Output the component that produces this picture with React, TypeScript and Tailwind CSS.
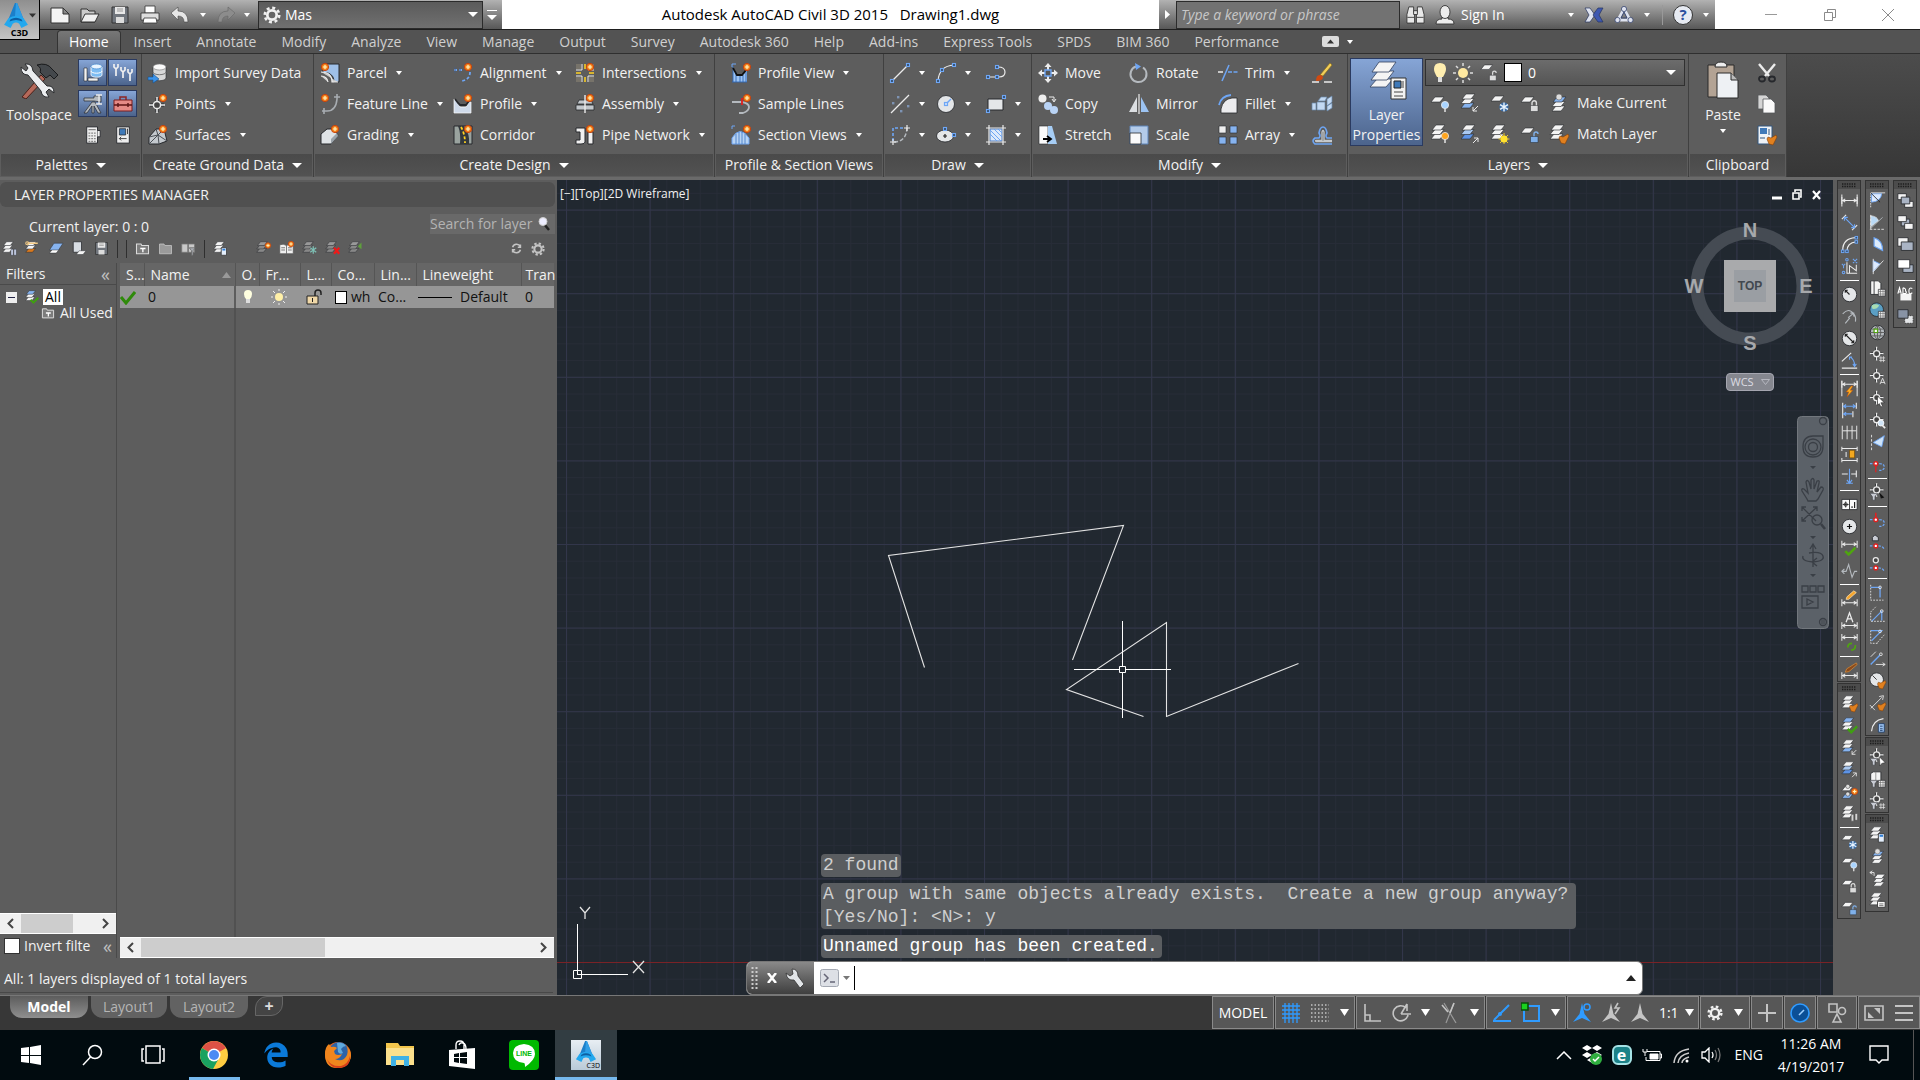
import type { ReactNode } from 'react'
import { FaEdgeLegacy } from 'react-icons/fa6'

const W = '#ececec'
const B = '#6ea6f5'
const D = '#26282c'

/* ---------- icon building blocks ---------- */

const Burst = ({ x = 15, y = 4 }) => (
  <g>
    <circle cx={x} cy={y} r="3.6" fill="#f58a1f" stroke="#c9400c" strokeWidth="1" />
    <path d={`M${x - 2} ${y}h4M${x} ${y - 2}v4`} stroke="#fff3c4" strokeWidth="1.2" />
  </g>
)

const Sheet = ({ x = 4, y = 5, f = '#f4f4f4' }) => (
  <path d={`M${x + 4} ${y}h9l-4 5h-9z`} fill={f} stroke={D} strokeWidth=".6" />
)

const Stack = ({ top = '#f4f4f4', mid = '#f4f4f4', low = '#f4f4f4' }) => (
  <g>
    <Sheet x={1} y={10} f={low} />
    <Sheet x={1} y={5.5} f={mid} />
    <Sheet x={2} y={1} f={top} />
  </g>
)

const Snow = () => (
  <g>
    <circle cx="14" cy="14" r="4.6" fill="#3c6ea8" />
    <path d="M14 9.5v9M10 11.7l8 4.6M18 11.7l-8 4.6" stroke="#e8f4ff" strokeWidth="1.4" />
  </g>
)

const Lock = ({ f = '#dcdcdc', open = false }) => (
  <g>
    <path d={open ? 'M14 13v-3a2 2 0 0 1 4 0' : 'M12 13v-3a2.2 2.2 0 0 1 4.4 0v3'} fill="none" stroke={f} strokeWidth="1.4" />
    <path d="M10.5 12.5h7.5v6h-7.5z" fill={f} stroke={D} strokeWidth=".5" />
  </g>
)

const Brush = () => <path d="M19 10l-5 3-3-1-1 2 2 5 4 1 2-4 2-4z" fill="#e0801f" stroke="#7d3c08" strokeWidth=".6" />

const Bulb = ({ f = '#a9d4ff' }) => (
  <g>
    <circle cx="15" cy="12" r="3.6" fill={f} stroke="#eee" strokeWidth=".8" />
    <path d="M15 15v4" stroke="#ddd" strokeWidth="1.6" />
  </g>
)

const Target = ({ cx = 9, cy = 9 }) => (
  <g fill="none" stroke={D} strokeWidth="3">
    <path d={`M${cx} ${cy - 7}v14M${cx - 7} ${cy}h14`} />
    <g stroke={W} strokeWidth="1.5">
      <path d={`M${cx} ${cy - 8}v5M${cx} ${cy + 3}v5M${cx - 8} ${cy}h5M${cx + 3} ${cy}h5`} />
      <circle cx={cx} cy={cy} r="3.6" fill="#444" />
    </g>
  </g>
)

const Funnel = () => <path d="M1 11h9l-3 4v4H4v-4z" fill="#c9ccd4" stroke={D} strokeWidth=".6" />

const Grid9 = () => (
  <g>
    <path d="M11 11h8v8h-8z" fill="#efefef" stroke={D} strokeWidth=".8" />
    <path d="M13.5 11v8M16.5 11v8M11 13.5h8M11 16.5h8" stroke="#666" strokeWidth=".7" />
  </g>
)

const Dim = ({ y = 14, c = W }) => (
  <path d={`M1 ${y - 4}v8M19 ${y - 4}v8M2 ${y}h16M5 ${y - 2}l-3 2 3 2M15 ${y - 2}l3 2-3 2`} fill="none" stroke={c} strokeWidth="1.2" />
)

const Osnap = () => (
  <g>
    <path d="M1 9h5M12 9q6 0 6 4t-6 4" fill="none" stroke={B} strokeWidth="1.4" strokeDasharray="3 1.5" />
    <circle cx="8" cy="9" r="2.2" fill="#fff" stroke="#e02020" strokeWidth="1.6" />
  </g>
)

const Nodes = ({ pts }: { pts: number[][] }) => (
  <g fill="#35506f" stroke={B} strokeWidth="1.1">
    {pts.map(([x, y], i) => (
      <rect key={i} x={x - 1.5} y={y - 1.5} width="3" height="3" />
    ))}
  </g>
)

const icons: Record<string, ReactNode> = {
  survey: (
    <g>
      <path d="M5 4v11a6 2.5 0 0 0 13 0V4z" fill="#d8d8d8" stroke={D} strokeWidth=".6" />
      <ellipse cx="11.5" cy="4" rx="6.5" ry="3" fill="#fafafa" stroke="#777" strokeWidth=".6" />
      <path d="M5 9a6 2.5 0 0 0 13 0" fill="none" stroke="#777" />
      <path d="M0 14h5v-3l6 5-6 4v-3H0z" fill="#3b93ea" stroke="#14508f" strokeWidth=".6" />
    </g>
  ),
  points: (
    <g>
      <Target cx={9} cy={11} />
      <Burst />
    </g>
  ),
  surfaces: (
    <g>
      <path d="M1 12L8 4h8l3 12-8 3H1z" fill="#c4c9ce" stroke={D} />
      <path d="M1 12l9-2 6-6M10 10l9 6M10 10L1 19M10 10L8 4M10 10l1 9" stroke="#4a4f55" fill="none" />
      <Burst />
    </g>
  ),
  parcel: (
    <g>
      <path d="M3 1h16v18h-5q0-7-6-9H3z" fill="#9fc0e8" stroke={D} />
      <path d="M1 9q11 0 11 10h6M1 13q6 0 7 6" fill="#c9c9c9" stroke="#eee" strokeWidth="1.2" />
      <Burst x={5} y={4} />
    </g>
  ),
  feature: (
    <g>
      <path d="M2 17h5q9 0 10-12M4 14v6M14 3h6M17 0v5" fill="none" stroke="#a8adb2" strokeWidth="1.6" />
      <Burst x={5} y={4} />
    </g>
  ),
  grading: (
    <g>
      <path d="M1 9l6-5h7l4 6-7 9H1z" fill="#dfe3e6" stroke={D} />
      <path d="M11 19V14l6-6 1 3z" fill="#9ba3aa" />
      <Burst />
    </g>
  ),
  alignment: (
    <g>
      <path d="M1 7h10M17 9q0 8-9 9" fill="none" stroke={B} strokeWidth="1.8" strokeDasharray="3 2" />
      <path d="M2 4v6M7 4v6" stroke="#4a5e80" />
      <Burst />
    </g>
  ),
  profile: (
    <g>
      <path d="M1 5l5 5 1 3h6l2-4 3-1v11H1z" fill="#cfdaea" stroke="#fafafa" strokeWidth=".7" />
      <path d="M2 5l3 4 2 2h6l3-4" fill="none" stroke={D} strokeWidth="1.8" />
      <Burst />
    </g>
  ),
  corridor: (
    <g>
      <path d="M1 1h18v18H1z" fill="#9aa39f" stroke={D} />
      <path d="M5 1h6q6 8 5 18H7Q8 8 5 1z" fill="#33383d" />
      <path d="M8 2q4 7 4 16" fill="none" stroke="#ffd21f" strokeWidth="1.8" strokeDasharray="3 2" />
      <Burst />
    </g>
  ),
  intersections: (
    <g>
      <path d="M1 1h5v5H1zM14 1h5v5h-5zM1 14h5v5H1zM14 14h5v5h-5z" fill="#77736a" />
      <path d="M7 1v6H1M13 1v6h6M7 19v-6H1M13 19v-6h6" fill="none" stroke={W} />
      <path d="M10 1v5M10 14v5M1 10h5M14 10h5" stroke="#ffd21f" strokeWidth="1.5" />
      <Burst />
    </g>
  ),
  assembly: (
    <g>
      <path d="M1 11h18v5H1zM4 6h12l2 4H2z" fill="#c2c7cb" stroke={D} strokeWidth=".8" />
      <path d="M10 1v18" stroke={W} strokeWidth="1.4" />
      <Burst />
    </g>
  ),
  pipe: (
    <g>
      <path d="M1 3h9v14q0 2-4 2H1v-4h4V7H1zM13 7h5v12h-5z" fill="#f0f0f0" stroke={D} />
      <Burst />
    </g>
  ),
  profileview: (
    <g>
      <path d="M2 4l5 8 6-1 3-4v12H2z" fill="#9cc3f2" />
      <path d="M2 3v16M5 9v10M9 12v7M12 12v7M15 8v11M1 19h15" stroke="#2f66b5" strokeWidth=".9" />
      <path d="M2 5l4 7h5l4-5" fill="none" stroke="#111" strokeWidth="1.8" />
      <path d="M1 4V1h4" stroke={B} fill="none" />
      <Burst x={16} />
    </g>
  ),
  sample: (
    <g>
      <path d="M1 8h9q8 1 8 5t-6 6H8" fill="none" stroke="#b5babf" strokeWidth="1.8" />
      <path d="M11 4v7" stroke="#e02020" strokeWidth="1.8" />
      <Burst x={16} />
    </g>
  ),
  section: (
    <g>
      <path d="M1 19v-6q8-13 17 0v6z" fill="#b7d3f4" stroke={B} />
      <path d="M5 9v10M8 7v12M11 7v12M14 9v10" stroke="#4a7fc8" strokeWidth=".9" />
      <path d="M1 4V1h3" stroke={B} fill="none" />
      <Burst x={16} />
    </g>
  ),
  line: (
    <g>
      <path d="M2 18L18 2" stroke={W} strokeWidth="1.2" />
      <Nodes pts={[[2, 18], [18, 2]]} />
    </g>
  ),
  arc: (
    <g>
      <path d="M2 18Q3 3 18 2" fill="none" stroke={W} strokeWidth="1.2" />
      <Nodes pts={[[2, 18], [6, 7], [18, 2]]} />
    </g>
  ),
  pline: (
    <g>
      <path d="M2 14h11q6 0 6-5t-7-5h-1" fill="none" stroke={W} strokeWidth="1.2" />
      <Nodes pts={[[2, 14], [11, 14], [11, 4]]} />
    </g>
  ),
  xline: (
    <g>
      <path d="M1 19L19 1" stroke={W} strokeWidth="1.2" />
      <g fill="#7d93b3">
        <rect x="7" y="2" width="2.4" height="2.4" />
        <rect x="2" y="8" width="2.4" height="2.4" />
        <rect x="10" y="16" width="2.4" height="2.4" />
        <rect x="17" y="11" width="2.4" height="2.4" />
      </g>
    </g>
  ),
  circle: (
    <g>
      <circle cx="10" cy="10" r="8.5" fill="#e4e6e8" stroke={D} strokeWidth=".8" />
      <path d="M10 10l5-5" stroke={B} strokeWidth="1.5" />
      <rect x="8.5" y="8.5" width="3" height="3" fill="#cfe2fb" stroke={B} strokeWidth="1.2" />
    </g>
  ),
  rect: (
    <g>
      <path d="M2 5h15v11H2z" fill="#e4e6e8" stroke={D} />
      <Nodes pts={[[2, 17], [18, 3]]} />
    </g>
  ),
  curve: (
    <g fill="none">
      <path d="M3 16V3h12" stroke={B} strokeWidth="1.6" strokeDasharray="3 2" />
      <path d="M4 17q12 0 13-14" stroke="#b5babf" strokeWidth="1.4" strokeDasharray="4 2" />
      <path d="M0 17h6M3 14v6M14 3h6M17 0v6" stroke={W} strokeWidth="1.2" />
    </g>
  ),
  ellipse: (
    <g>
      <ellipse cx="9" cy="11" rx="8.5" ry="6" fill="#e4e6e8" stroke={D} strokeWidth=".8" />
      <path d="M7 11h4M9 9v4" stroke="#222" strokeWidth="1.2" />
      <Nodes pts={[[9, 4], [18, 10]]} />
    </g>
  ),
  hatch: (
    <g>
      <path d="M4 4h12v12H4z" fill="#dfeafa" stroke="#4a7fc8" />
      <path d="M4 9l7 7M4 5l11 11M8 4l8 8M12 4l4 4" stroke={B} />
      <path d="M3 0v20M17 0v20M0 3h20M0 17h20" stroke={W} strokeWidth="1.2" />
    </g>
  ),
  move: (
    <g>
      <path d="M10 0l3.5 4h-7zM10 20l3.5-4h-7zM0 10l4-3.5v7zM20 10l-4-3.5v7z" fill={W} />
      <path d="M10 3v14M3 10h14" stroke={W} strokeWidth="2" />
      <path d="M7 7h6v6H7z" fill="#555" stroke={B} strokeWidth="1.4" />
    </g>
  ),
  copy: (
    <g>
      <circle cx="4.5" cy="4.5" r="4" fill="#eee" />
      <circle cx="10" cy="12" r="4" fill="#b9d3f5" />
      <circle cx="16" cy="16" r="4" fill="#b9d3f5" />
      <path d="M11 3h5v4M14 5l2 3 2-3" fill="none" stroke={W} />
    </g>
  ),
  stretch: (
    <g>
      <path d="M1 1h9v18H1z" fill="#fafafa" stroke={D} strokeWidth=".6" />
      <path d="M10 1h4l5 18h-9z" fill="#a6cdf5" />
      <path d="M5 14h7M9 11l4 3-4 3" fill="none" stroke="#000" strokeWidth="1.8" />
    </g>
  ),
  rotate: (
    <g>
      <path d="M7 3.5a8 8 0 1 0 7 1" fill="none" stroke="#b5babf" strokeWidth="2" />
      <path d="M6 0l6 3.5L7 7z" fill={B} />
    </g>
  ),
  mirror: (
    <g>
      <path d="M8 3v15H0z" fill="#dcdfe2" />
      <path d="M12 3v15h8z" fill="#9cc3f2" />
      <path d="M10 0v20" stroke={W} strokeWidth="1.2" />
    </g>
  ),
  scale: (
    <g>
      <path d="M1 1h18v18H1z" fill="#b3cbe9" stroke="#5f85b9" />
      <path d="M1 8h11v11H1z" fill="#fafafa" stroke={D} strokeWidth=".8" />
    </g>
  ),
  trim: (
    <g fill="none" strokeWidth="1.5">
      <path d="M0 9h5" stroke={W} />
      <path d="M4 18L11 2" stroke={B} />
      <path d="M10 9h10" stroke={B} strokeDasharray="4 1.5" />
    </g>
  ),
  fillet: (
    <g>
      <path d="M3 19V15Q5 5 14 4h5v15z" fill="#ececee" stroke={D} strokeWidth=".8" />
      <path d="M1 11Q3 2 13 1" fill="none" stroke={B} strokeWidth="1.8" />
    </g>
  ),
  array: (
    <g stroke={D} strokeWidth=".6">
      <path d="M1 1h7v7H1z" fill="#eee" />
      <path d="M12 1h7v7h-7zM1 12h7v7H1zM12 12h7v7h-7z" fill="#86b3ef" />
    </g>
  ),
  erase: (
    <g>
      <path d="M8 12L18 0l2 2-9 11z" fill="#f2cf5a" stroke="#8a6a12" strokeWidth=".6" />
      <path d="M4 18q0-7 5-6l2 2q0 4-7 4z" fill="#cf4a12" />
      <path d="M0 19h7M12 19h8" stroke={W} strokeWidth="1.4" />
    </g>
  ),
  explode: (
    <g fill="#c3d9f2" stroke="#6787ab" strokeWidth=".7">
      <path d="M5 8h8v8H5zM9 3h6l-2 4H6zM15 5l5-3v6l-5 4zM0 9h4v7H0zM15 12l5-3v5l-5 3z" />
    </g>
  ),
  offset: (
    <g fill="none">
      <path d="M20 19H3q-4-3 0-6h4q2-2 0-5 1-6 4-6t4 6q-2 3 0 5h5" stroke={B} strokeWidth="1.6" />
      <path d="M20 16.500H4q-1-1 0-1h6V7q1-3 2 0v8.500h8" stroke="#c5c9cc" strokeWidth="1.3" />
    </g>
  ),
  layoff: <g><Sheet x={1} y={4} /><Bulb /></g>,
  layiso: <g><Stack low="#86b3ef" /><path d="M18 13l-5 5v-4M13 18h4" stroke={W} fill="none" /></g>,
  layfrz: <g><Sheet x={1} y={3} /><Snow /></g>,
  laylck: <g><Sheet x={1} y={4} /><Lock /></g>,
  laycur: <g><g transform="translate(2 3)"><Stack top="#86b3ef" /></g><circle cx="10" cy="4" r="3" fill="#ddd" stroke="#666" strokeWidth=".6" /></g>,
  layon: <g><Stack /><Bulb f="#ffa51f" /></g>,
  layuniso: <g><Stack mid="#a9c8f0" low="#5d93e6" /><path d="M13 19l5-5v4M18 14h-4" stroke={W} fill="none" /></g>,
  laythw: <g><Stack /><path d="M14 9v11M8.500 15h11M10 11l8 8M18 11l-8 8" stroke="#ffd21f" strokeWidth=".9" /><circle cx="14" cy="15" r="3.5" fill="#ffe12e" /></g>,
  layulk: <g><Sheet x={1} y={4} /><Lock f="#7fb0ea" open /></g>,
  layopen: <g><Sheet x={1} y={1} /><Lock open /></g>,
  laymch: <g><Stack /><Brush /></g>,
  cut: (
    <g fill="none">
      <path d="M2 1l10 12M18 1L8 13" stroke={W} strokeWidth="2.4" />
      <ellipse cx="5" cy="16" rx="3" ry="2.5" stroke="#26282c" strokeWidth="1.8" />
      <ellipse cx="15" cy="16" rx="3" ry="2.5" stroke="#26282c" strokeWidth="1.8" />
    </g>
  ),
  clipcopy: (
    <g fill="#fafafa" stroke="#55585c" strokeWidth=".8">
      <path d="M1 1h8l3 3v11H1z" fill="#d5d5d5" />
      <path d="M6 5h8l4 4v10H6z" />
    </g>
  ),
  clipprop: (
    <g>
      <path d="M1 1h14v18H1z" fill="#eef2f6" stroke="#33567f" />
      <path d="M3 3h7v6H3z" fill="#3f79b8" />
      <path d="M3 13h5M12 4v6" stroke="#33567f" />
      <Brush />
    </g>
  ),
  // quick access bar
  new: <path d="M1 3h12l6 6v9H1zM13 3v6h6" fill="#f4f4f4" stroke="#333" />,
  open: (
    <g stroke="#333">
      <path d="M1 4h6l2 2h6v11H1z" fill="#ccc" />
      <path d="M1 17L5 9h14l-4 8z" fill="#f0f0f0" />
    </g>
  ),
  save: (
    <g>
      <path d="M2 2h16v16H2z" fill="#70757c" stroke="#333" />
      <path d="M5 2h10v7H5z" fill="#e8e8e8" />
      <path d="M6 12h8v6H6z" fill="#dcdcdc" />
      <path d="M7 4h6M7 6h6" stroke="#999" />
    </g>
  ),
  print: (
    <g stroke="#333" strokeWidth=".8">
      <path d="M5 1h10v7H5z" fill="#fff" />
      <path d="M1 8h18v7H1z" fill="#dedede" />
      <path d="M4 13h12l1 5H3z" fill="#fff" />
    </g>
  ),
  undo: <path d="M1 8l7-6v4q10 0 10 11h-4q0-6-6-6v4z" fill="#e6e6e6" stroke="#444" strokeWidth=".6" />,
  redo: <path d="M19 8l-7-6v4Q2 6 2 17h4q0-6 6-6v4z" fill="#8c8c8c" stroke="#666" strokeWidth=".6" />,
  gear: (
    <g fill="none">
      <circle cx="10" cy="10" r="8" stroke="#f0f0f0" strokeWidth="3" strokeDasharray="3.3 2.98" />
      <circle cx="10" cy="10" r="5.2" stroke="#f0f0f0" strokeWidth="3" />
    </g>
  ),
  binoculars: (
    <g fill="#e8e8e8" stroke="#333" strokeWidth=".9">
      <path d="M3 2h5v5l1 3v9H1v-9zM12 2h5l2 8v9h-8v-9l1-3z" />
      <path d="M1.5 13h7M11.5 13h7M8 6h4v4H8z" />
    </g>
  ),
  person: (
    <g fill="#ededed" stroke="#333" strokeWidth=".9">
      <path d="M1 19q0-5 6-5v-2h6v2q6 0 6 5z" />
      <ellipse cx="10" cy="7" rx="5" ry="6.5" />
    </g>
  ),
  exchange: (
    <g stroke="#26335e" strokeWidth=".7">
      <path d="M1 3h5l5 7-5 7H1l4-7z" fill="#dfe4f0" />
      <path d="M19 3h-5l-3 4-2 3 5 7h5l-4-7z" fill="#3e58b0" />
    </g>
  ),
  a360: (
    <g fill="none">
      <path d="M10 4L4 15h12z" stroke="#dfe3ef" strokeWidth="3" />
      <path d="M10 7l-3 6h6z" stroke="#35446f" />
      <g fill="#dfe3ef" stroke="#35446f" strokeWidth=".8">
        <circle cx="10" cy="4" r="2.6" />
        <circle cx="3.5" cy="15" r="2.6" />
        <circle cx="16.5" cy="15" r="2.6" />
      </g>
    </g>
  ),
  // palette launchers
  panorama: (
    <g>
      <path d="M1 5h3v13H1zM5 15h10v3H5z" fill="#f2f2f2" stroke={D} strokeWidth=".6" />
      <path d="M8 4v8a5 2 0 0 0 11 0V4z" fill="#7dbcf2" stroke="#fff" strokeWidth=".8" />
      <path d="M8 8a5 2 0 0 0 11 0" fill="none" stroke="#fff" />
      <ellipse cx="13.5" cy="3.5" rx="5.5" ry="2.400" fill="#eaf5ff" stroke="#468ad0" strokeWidth=".7" />
    </g>
  ),
  wrenches: (
    <g fill="none" stroke="#f0f0f0" strokeWidth="1.7">
      <path d="M1 1v3l2 2 2-2V1M3 6v7M8 4v3l2 2 2-2V4M10 9v6M15 6v3l2 2 2-2V6M17 11v7" />
    </g>
  ),
  tripod: (
    <g stroke={D} strokeWidth=".7" fill="#b5babf">
      <path d="M1 4h10V2h7v6l-7-1H1zM9 8h3l6 11h-3l-4-7v7H9v-7l-5 7H1z" />
      <path d="M13 1h6M16 1v9M13 10h6" stroke={W} strokeWidth="1.3" />
    </g>
  ),
  toolbox: (
    <g>
      <path d="M7 6V3h6v3" fill="none" stroke="#8e2525" strokeWidth="1.5" />
      <path d="M1 6h18v11H1z" fill="#e58a86" stroke="#7d1d1d" />
      <path d="M1 11h18M5 9v4M15 9v4" stroke="#5c1515" strokeWidth="1.4" />
    </g>
  ),
  panel: (
    <g>
      <path d="M3 1h12v18H3z" fill="#eee" stroke={D} />
      <path d="M15 5h3v7h-3" fill="#eee" stroke={D} />
      <path d="M5 4h8M5 8h2M8 8h2M11 8h2M5 11h2M8 11h2M11 11h2M5 14h2M8 14h2M11 14h2M5 17h2M8 17h2M11 17h2" stroke="#888" strokeWidth="1.4" />
    </g>
  ),
  props: (
    <g>
      <path d="M3 1h14v18H3z" fill="#eee" stroke={D} />
      <path d="M6 3h7v7H6z" fill="#3f79b8" stroke="#222" strokeWidth=".8" />
      <path d="M6 14h8M8 12l-2 2 2 2M15 3v6" stroke="#333" fill="none" />
    </g>
  ),
  // dimension bar
  dimlin: <g><Dim y={10} /><path d="M1 3v14M19 3v14" stroke={W} strokeWidth="1.2" /></g>,
  dimali: (
    <g>
      <path d="M1 6l5-5M13 19l6-6" stroke={W} strokeWidth="1.3" />
      <path d="M4 4l12 12M4 8V4h4M16 12v4h-4" fill="none" stroke={B} strokeWidth="1.3" />
    </g>
  ),
  dimarc: (
    <g fill="none">
      <path d="M2 17Q2 3 17 2M7 18Q7 8 18 7" stroke={W} strokeWidth="1.5" />
      <Nodes pts={[[2, 18], [7, 18], [18, 2], [18, 7]]} />
    </g>
  ),
  dimord: (
    <g fill="none" strokeWidth="1.2">
      <path d="M7 5v13h12M10 18V9l8 6V8" stroke={W} />
      <path d="M14 1l5 5M19 1l-5 5M1 7l2 2 2-2M3 9v3" stroke={B} />
      <circle cx="7" cy="2" r="1.5" stroke={B} />
      <circle cx="3" cy="17" r="1.5" stroke={B} />
    </g>
  ),
  dimrad: (
    <g>
      <circle cx="10" cy="10" r="8.5" fill="#e4e6e8" stroke={D} />
      <path d="M10 10L5 5M5 8V5h3" stroke="#222" fill="none" strokeWidth="1.3" />
    </g>
  ),
  dimjog: (
    <g fill="none" stroke="#b5babf" strokeWidth="1.3">
      <path d="M2 7q7-8 13 0 3 4 2 9M5 18l5-6-1-1 6-5M11 6h4v4" />
    </g>
  ),
  dimdia: (
    <g>
      <circle cx="10" cy="10" r="8.5" fill="#e4e6e8" stroke={D} />
      <path d="M5 5l10 10M5 8V5h3M15 12v3h-3" stroke="#222" fill="none" strokeWidth="1.3" />
    </g>
  ),
  dimang: (
    <g fill="none" strokeWidth="1.3">
      <path d="M1 11L12 1M1 19h18" stroke={W} />
      <path d="M11 6q5 3 5 10M10 9V6h3M14 14l2 3 2-3" stroke={B} />
    </g>
  ),
  dimquick: <g><path d="M1 1v18M19 1v18" stroke={W} strokeWidth="1.2" /><Dim y={5} /><path d="M12 7l-6 7h3l-2 6 7-8h-3l3-5z" fill="#ffb01f" stroke="#b5480c" strokeWidth=".6" /></g>,
  dimbase: (
    <g fill="none" strokeWidth="1.3">
      <path d="M2 1v18M18 1v7M14 11v7" stroke={W} />
      <path d="M3 5h14M6 3L3 5l3 2M14 3l3 2-3 2M3 14h10M6 12l-3 2 3 2" stroke={B} />
    </g>
  ),
  dimcont: <path d="M1.5 2v16M7.200 2v16M13 2v16M18.500 2v16M2 8h16" stroke={W} strokeWidth="1.1" />,
  dimspace: (
    <g>
      <path d="M1 1v5M19 1v5M1 3h18M1 14v5M19 14v5M1 17h18M6 7v6" stroke={W} strokeWidth="1.2" />
      <path d="M10 5h6v9h-6z" fill="#f3a81f" stroke="#6d4505" strokeWidth=".8" />
    </g>
  ),
  dimbreak: (
    <g fill="none" strokeWidth="1.3">
      <path d="M1 7h7M12 7h6M18 3v8" stroke={W} />
      <path d="M10 1v17M6 18h8M7 14l3 4 3-4" stroke={B} />
    </g>
  ),
  tol: (
    <g>
      <path d="M1 4h18v12H1z" fill="#fafafa" stroke={D} />
      <path d="M10 4v12M2 10h7M5.5 6.5v7" stroke="#222" />
      <circle cx="5.5" cy="10" r="2" fill="none" stroke="#222" />
      <path d="M16 7v7M13 12v2" stroke="#222" strokeWidth="1.4" />
    </g>
  ),
  center: (
    <g>
      <circle cx="10" cy="10" r="8.5" fill="#e4e6e8" stroke={D} />
      <path d="M7 10h6M10 7v6" stroke="#111" strokeWidth="1.4" />
    </g>
  ),
  inspect: <g><Dim y={5} /><path d="M5 13l4 4 8-8" fill="none" stroke="#4fa50f" strokeWidth="3" /></g>,
  jogline: <path d="M1 11h5l3-8 4 15 3-7h3M4 8l-3 3 3 3" fill="none" stroke="#b5babf" strokeWidth="1.3" />,
  dimedit: <g><Dim y={15} /><path d="M6 11l1-3 8-7 3 2-9 8z" fill="#f6a52b" stroke="#ffe8c0" strokeWidth=".8" /></g>,
  dimtext: <g><Dim y={16} /><path d="M6 12l4-11 4 11M7.5 8h5" stroke={W} strokeWidth="1.5" fill="none" /></g>,
  dimupd: <g><Dim y={4} /><path d="M8 16q0-5 5-5M17 13q0 6-5 6" fill="none" stroke="#4fa50f" strokeWidth="2" /></g>,
  dimstyle: <g><Dim y={16} /><path d="M5 12q1-5 5-6L18 1l1 2-7 6q-2 3-7 3z" fill="#8a4a1c" stroke="#e59a3f" strokeWidth=".7" /></g>,
  laychk: <g><Stack top="#86b3ef" /><path d="M8 14l4 4 7-7" fill="none" stroke="#3fa010" strokeWidth="2.8" /></g>,
  layppl: (
    <g>
      <Sheet x={1} y={13} f="#86b3ef" />
      <Sheet x={1} y={4} />
      <circle cx="8" cy="4" r="2.5" fill="#ddd" stroke="#333" strokeWidth=".6" />
      <circle cx="8" cy="13" r="2.5" fill="#ddd" stroke="#333" strokeWidth=".6" />
      <Burst x={16} y={10} />
    </g>
  ),
  laywalk: <g><Stack /><path d="M12 11h3v8h-3zM16.5 10h3v8h-3z" fill="#d5d5d5" stroke="#444" strokeWidth=".6" /></g>,
  // transparent command bar
  brgdist: <g><path d="M2 1v17" stroke={W} strokeDasharray="2 1" /><path d="M3 2h12q-1 9-12 10z" fill="#dceaff" stroke={B} /><path d="M2 1h17" stroke={W} /><path d="M2 1l11 11" stroke="#222" /></g>,
  azdist: <g><path d="M2 2q8 1 9 6L2 15z" fill="#b9d9f5" stroke={W} strokeWidth=".8" /><path d="M1 18h18M2 1v17" stroke={W} strokeDasharray="3 1.5" /><path d="M2 17L16 4" stroke="#b5babf" /></g>,
  defl: <path d="M6 2q10 3 10 15L6 12z" fill="#dcebfb" stroke={B} strokeWidth="1.4" />,
  ang: <g><path d="M5 3l8 4-8 9z" fill="#dceaff" stroke={B} /><path d="M5 1v18M5 16L17 3" stroke={W} /></g>,
  sheetgrid: <g><path d="M2 1h9l3 3v13H2zM6 1v16" fill="#f4f4f4" stroke={D} /><Grid9 /></g>,
  globegrid: <g><circle cx="9" cy="9" r="8" fill="#5b9fc4" stroke={D} /><path d="M3 4q5-3 9 0-3 5-8 4z" fill="#a8dcb2" /><Grid9 /></g>,
  globe: (
    <g fill="none">
      <circle cx="10" cy="10" r="8.5" fill="#b5babf" stroke={D} />
      <path d="M10 1v18M2 10h16M3 6h14M3 14h14M10 1q-8 9 0 18M10 1q8 9 0 18" stroke="#555" />
      <path d="M6 6h4v4H6z" stroke="#4fa50f" strokeWidth="1.4" fill="#fff" />
    </g>
  ),
  ptnum: <g><Target /><path d="M12 14h7M12 17h7M14 12v7M17 12v7" stroke={W} strokeWidth=".8" /></g>,
  ptname: <g><Target /><path d="M13 19l3-7 3 7M14 17h4" stroke={W} fill="none" /></g>,
  ptpick: <g><Target /><path d="M10 7l8 8h-4l2 4-2 1-2-4-2 2z" fill="#fff" stroke="#222" strokeWidth=".7" /></g>,
  ptzoom: <g><Target /><circle cx="14" cy="13" r="3.5" fill="#cfe4f7" stroke="#fff" /><path d="M16 16l3 3" stroke={W} strokeWidth="2" /></g>,
  sideshot: <g><path d="M3 1v18" stroke={W} strokeDasharray="3 2" /><path d="M5 10L18 2l-3 13z" fill="#cfe4fa" stroke={B} /></g>,
  stnoff: <g><Osnap /><path d="M8 10v9" stroke="#e02020" strokeWidth="1.5" /></g>,
  ptfilt: <g><Target cx={9} cy={7} /><Funnel /><path d="M12 10l6 6-4 1z" fill="#111" /></g>,
  filtpick: <g><Target cx={9} cy={7} /><Funnel /><path d="M12 9l7 7-4 1-2 3z" fill="#fff" stroke="#222" strokeWidth=".6" /></g>,
  profsta: <g><Osnap /><path d="M8 1v6" stroke="#e02020" strokeWidth="1.8" /></g>,
  profbld: <g><path d="M1 14h5M11 14q5 0 7 4" fill="none" stroke={B} strokeWidth="1.4" strokeDasharray="3 1.5" /><circle cx="8" cy="14" r="2.2" fill="#fff" stroke="#e02020" strokeWidth="1.6" /><path d="M4 8V4l3-3 4 3v4z" fill="#c9ccd4" stroke={D} /></g>,
  profpt: <g><path d="M1 14h5M11 14q5 0 7 4" fill="none" stroke={B} strokeWidth="1.4" strokeDasharray="3 1.5" /><circle cx="8" cy="14" r="2.2" fill="#fff" stroke="#e02020" strokeWidth="1.6" /><circle cx="8" cy="5" r="3" fill="#444" stroke={W} strokeWidth="1.4" /></g>,
  tr1: <g fill="none"><path d="M2 1v18h15" stroke={W} strokeDasharray="2 1.5" /><path d="M2 4h11v12" stroke={B} strokeWidth="1.5" /><circle cx="13" cy="4" r="1.6" stroke={W} /></g>,
  tr2: <g fill="none"><path d="M3 18L15 6v11" stroke={B} strokeWidth="1.4" /><path d="M2 7l6-6M2 8v10h17" stroke={W} strokeDasharray="2 1.5" /><circle cx="15" cy="6" r="1.6" stroke={W} /></g>,
  tr3: <g fill="none"><path d="M2 3h13L3 15" stroke={B} strokeWidth="1.4" /><path d="M2 3v15h8M10 17l8-9" stroke={W} strokeDasharray="2 1.5" /><circle cx="13" cy="4" r="1.6" stroke={W} /></g>,
  tr4: <g fill="none"><path d="M2 17L13 6" stroke={B} strokeWidth="1.6" /><path d="M2 8l6-6M8 17h11M16 15l3 2-3 2" stroke={W} /><circle cx="14" cy="5" r="1.6" stroke={W} /></g>,
  radmch: <g><circle cx="9" cy="9" r="8" fill="#e4e6e8" stroke={D} /><path d="M9 9L4 4" stroke="#222" /><Brush /></g>,
  lenmch: <g><path d="M2 17L15 4M12 3l5-1-1 5M1 13l6 6" fill="none" stroke={W} /><Brush /></g>,
  curvecalc: (
    <g fill="none">
      <path d="M3 18Q4 5 17 3" stroke={W} strokeWidth="1.4" />
      <path d="M11 9h7v10h-7z" fill="#9cc3f2" stroke="#1f3b63" />
      <path d="M13 12h3M13 15h3M13 17h3" stroke="#1f3b63" />
    </g>
  ),
  filtgrid: <g><path d="M2 3l3-2h9v11H2z" fill="#f4f4f4" stroke={D} /><path d="M8 1v11" stroke="#888" /><Funnel /><Grid9 /></g>,
  filtnum: <g><Target cx={9} cy={7} /><Funnel /><path d="M12 14h7M12 17h7M14 12v7M17 12v7" stroke={W} strokeWidth=".8" /></g>,
  laystate: <g><Stack /><path d="M11 9h7v10h-7z" fill="#e4eefb" stroke="#333" /><path d="M12.5 11.5h4" stroke="#2f7fd8" strokeWidth="2.4" /></g>,
  layprev: <g><g transform="translate(4 4)"><Stack /></g><path d="M1 3h5v4M4 1L1 3l3 2" fill="none" stroke={W} /></g>,
  laywin: <g><Stack /><path d="M10 11h9v7h-9z" fill="#fafafa" stroke="#333" /><path d="M12 14h5M12 16h5" stroke="#666" /></g>,
  // draw order bar
  front: <g stroke={D}><path d="M1 2h10v7H1zM9 11h10v7H9z" fill="#f4f4f4" /><path d="M5 6h10v8H5z" fill="#aab4c4" /></g>,
  back: <g stroke={D}><path d="M5 6h10v8H5z" fill="#aab4c4" /><path d="M1 2h10v7H1zM9 11h10v7H9z" fill="#f4f4f4" /></g>,
  above: <g stroke={D}><path d="M1 2h12v10H1z" fill="#f4f4f4" /><path d="M5 7h14v10H5z" fill="#aab4c4" /></g>,
  under: <g stroke={D}><path d="M7 8h12v9H7z" fill="#aab4c4" /><path d="M1 2h14v10H1z" fill="#fff" /></g>,
  textfront: <g><path d="M4 9h13v8H4z" fill="#f4f4f4" /><path d="M1 9l2-7 2 7M2 7h2M7 2v7h3q2-2 0-3 1-3-3-4M18 3q-4-2-4 3t4 2" stroke="#fff" fill="none" strokeWidth="1.3" /></g>,
  hatchback: <g><path d="M9 9h10v9H9z" fill="#e4e6e8" stroke="#333" strokeDasharray="2 1" /><path d="M1 2h12v10H1z" fill="#8893a5" stroke={D} /></g>,
  // layer manager toolbar
  lf1: <g><Stack /><path d="M12 11h3v8h-3zM16 11h3v8h-3z" fill="#ccd6ee" stroke={D} strokeWidth=".5" /></g>,
  lf2: <g><Stack low="#d9791e" /><path d="M3 3h14" stroke="#f3cb86" strokeWidth="2" fill="none" /><circle cx="3" cy="3" r="2" fill="none" stroke="#f3cb86" strokeWidth="1.500" /></g>,
  lf3: <g><Sheet x={2} y={11} f="#fff" /><path d="M8 3h12l-6 9H2z" fill="#86b3ef" stroke={D} strokeWidth=".6" /></g>,
  lf4: <g><path d="M3 1h11v14H3z" fill="#d8dde3" stroke={D} /><Sheet x={7} y={13} /></g>,
  folder: <path d="M2 4h6l1 2h9v11H2z" fill="#9a9a9a" stroke="#c8c8c8" />,
  folderf: <g><path d="M2 4h6l1 2h9v11H2z" fill="#7c7c7c" stroke="#dcdcdc" strokeWidth="1.4" /><path d="M7 10h7M10.5 10v5" stroke="#fff" strokeWidth="1.8" /></g>,
  book: <g><path d="M1 4h8v11H1zM10 4h8v11h-8z" fill="#c9c9c9" stroke="#777" /><path d="M11 9h8l-3 4v6h-2v-6z" fill="#a9adb3" stroke="#666" /></g>,
  newl: <g><g stroke="#ccc"><Stack top="#999" mid="#888" low="#888" /></g><Burst x={16} y={6} /></g>,
  newvp: <g><path d="M1 5q5-2 9 1 4-3 9-1v12H1z" fill="#f0f0f0" stroke="#555" /><path d="M10 6v11M3 9h5M3 12h5M12 9h5M12 12h5" stroke="#555" /><Burst x={16} y={4} /></g>,
  frzl: <g><Stack top="#999" mid="#888" low="#888" /><path d="M15 7v10M11 9l8 6M19 9l-8 6" stroke="#7fc3b8" strokeWidth="1.6" /></g>,
  dell: <g><Stack top="#999" mid="#888" low="#888" /><path d="M12 9l7 8M19 9l-7 8" stroke="#f01818" strokeWidth="3" /></g>,
  setl: <g><Stack top="#999" mid="#888" low="#888" /><path d="M18 2v9l-5-4z" fill="#5fa03c" /></g>,
  refresh: <path d="M16 4v4h-4M4 16v-4h4M4 8a6.5 6.5 0 0 1 12-1M16 12a6.5 6.5 0 0 1-12 1" fill="none" stroke="#c4c4c4" strokeWidth="2.4" />,
}

const Ico = ({ n, s = 20 }: { n: string; s?: number }) => (
  <svg width={s} height={s} viewBox="0 0 20 20" className="shrink-0 overflow-visible" aria-hidden="true">
    {icons[n]}
  </svg>
)

const Caret = ({ big = false }) => (
  <svg width={big ? 10 : 6} height={big ? 5 : 4} viewBox="0 0 10 6" preserveAspectRatio="none" className="shrink-0" aria-hidden="true">
    <path d="M0 0h10L5 6z" fill="#fff" />
  </svg>
)

const IconBtn = ({ n, label, s, className = '' }: { n: string; label?: string; s?: number; className?: string }) => (
  <button type="button" aria-label={label ?? n} className={`flex shrink-0 items-center justify-center ${className}`}>
    <Ico n={n} s={s} />
  </button>
)

/* ---------- title bar ---------- */

const AppLogo = ({ s = 26 }) => (
  <svg width={s} height={s} viewBox="0 0 24 24" aria-hidden="true">
    <path d="M11 1L5 16q7-5 14 0L13 1z" fill="#1b7fca" />
    <path d="M12 1l-1 13q4 0 8 2L13 1z" fill="#2f9ee6" />
    <path d="M5 15l-4 6 6 3 2-4q3-2 6 0l2 4 6-3-4-6q-7-4-14 0z" fill="#23a8ee" />
    <path d="M7 16q5-3 10 0l1 2q-6-3-12 0z" fill="#0d5fa3" />
  </svg>
)

function TitleBar() {
  return (
    <header className="relative flex h-[30px] shrink-0 border-b border-[#1e1e1e] bg-white">
      <button
        type="button"
        aria-label="Application menu"
        className="absolute top-0 left-0 z-10 flex h-10 w-10 flex-col items-center border-r border-b border-black bg-linear-to-b from-[#8f8f8f] to-[#c4c4c4] pt-0.5"
      >
        <span className="flex items-center">
          <AppLogo />
          <svg width="7" height="5" viewBox="0 0 10 6" aria-hidden="true">
            <path d="M0 0h10L5 6z" fill="#333" />
          </svg>
        </span>
        <span className="text-[9px] leading-[9px] font-bold text-black">C3D</span>
      </button>
      <div className="flex w-[502px] shrink-0 items-center bg-linear-to-b from-[#b2b2b2] to-[#585858] pl-[50px]">
        <div className="flex items-center gap-2.5">
          <IconBtn n="new" />
          <IconBtn n="open" />
          <IconBtn n="save" />
          <IconBtn n="print" />
          <IconBtn n="undo" />
        </div>
        <button type="button" aria-label="Undo list" className="px-2.5"><Caret /></button>
        <IconBtn n="redo" />
        <button type="button" aria-label="Redo list" className="px-2"><Caret /></button>
        <div className="flex h-7 w-[225px] items-center border border-[#2b2b2b] bg-linear-to-b from-[#5b5b5b] to-[#707070] px-1">
          <Ico n="gear" s={18} />
          <select aria-label="Workspace" className="flex-1 appearance-none bg-transparent pl-1 text-sm text-white">
            <option>Mas</option>
          </select>
          <Caret big />
        </div>
        <button type="button" aria-label="Customize" className="flex flex-col items-center gap-1 pl-1">
          <span className="h-px w-2.5 bg-white" />
          <Caret big />
        </button>
      </div>
      <h1 className="flex flex-1 items-center justify-center text-[15px] whitespace-pre text-black">
        {'Autodesk AutoCAD Civil 3D 2015   Drawing1.dwg'}
      </h1>
      <div className="flex w-[556px] shrink-0 items-center bg-linear-to-b from-[#b2b2b2] to-[#585858]">
        <button type="button" aria-label="Toggle search" className="flex w-[17px] justify-center">
          <svg width="5" height="9" viewBox="0 0 5 9"><path d="M0 0l5 4.5L0 9z" fill="#fff" /></svg>
        </button>
        <input
          aria-label="Search help"
          placeholder="Type a keyword or phrase"
          className="h-7 w-56 border border-[#2b2b2b] bg-[#727272] px-1 text-sm italic placeholder:text-[#c8c8c8]"
        />
        <div className="flex items-center gap-2.5 px-1.5">
          <IconBtn n="binoculars" s={19} />
          <IconBtn n="person" />
        </div>
        <button type="button" className="flex w-[113px] items-center justify-between text-sm text-white">
          Sign In
          <Caret />
        </button>
        <div className="flex items-center gap-2.5 pl-2.5">
          <IconBtn n="exchange" />
          <IconBtn n="a360" />
          <Caret />
        </div>
        <span className="ml-3 h-5 w-px bg-[#999]" />
        <button type="button" aria-label="Help" className="ml-2.5 flex h-5 w-5 items-center justify-center rounded-full border border-[#333] bg-[#e6eaf2] text-[15px] font-bold text-[#2c4f9e]">
          ?
        </button>
        <span className="pl-2.5"><Caret /></span>
      </div>
      <div className="flex w-[205px] shrink-0 items-center justify-between pr-[26px] pl-[50px]">
        <button type="button" aria-label="Minimize" className="h-px w-3 bg-[#999]" />
        <button type="button" aria-label="Restore">
          <svg width="12" height="12" fill="none" stroke="#8a8a8a"><path d="M.5 3.5h8v8h-8zM3.5 3V.5h8v8H9" /></svg>
        </button>
        <button type="button" aria-label="Close">
          <svg width="12" height="12" stroke="#8a8a8a"><path d="M0 0l12 12M12 0L0 12" /></svg>
        </button>
      </div>
    </header>
  )
}

/* ---------- ribbon ---------- */

const tabs = ['Home', 'Insert', 'Annotate', 'Modify', 'Analyze', 'View', 'Manage', 'Output', 'Survey', 'Autodesk 360', 'Help', 'Add-ins', 'Express Tools', 'SPDS', 'BIM 360', 'Performance']

function RibbonTabs() {
  return (
    <nav className="flex h-6 shrink-0 items-end gap-px border-b border-[#2f2f2f] bg-[#535353] pl-[57px] text-sm leading-[22px] text-[#d0d0d0]">
      {tabs.map((t, i) => (
        <button
          key={t}
          type="button"
          className={
            i === 0
              ? 'rounded-t-sm border border-b-0 border-[#333] bg-linear-to-b from-[#777] to-[#5d5d5d] px-[11px] text-white'
              : 'px-3'
          }
        >
          {t}
        </button>
      ))}
      <button type="button" aria-label="Minimize ribbon" className="ml-[30px] flex h-full items-center gap-2">
        <svg width="17" height="11"><rect width="17" height="11" rx="2" fill="#ddd" /><path d="M5 7.5h7L8.5 3.5z" fill="#333" /></svg>
        <Caret />
      </button>
    </nav>
  )
}

type Tool = { n: string; t?: string; caret?: boolean }

const Tools = ({ items, className = '' }: { items: Tool[]; className?: string }) => (
  <div className={`flex flex-col ${className}`}>
    {items.map((i) => (
      <button key={i.n} type="button" aria-label={i.t ?? i.n} className="flex h-[31px] items-center whitespace-nowrap">
        <Ico n={i.n} />
        {i.t && <span className="pl-[7px]">{i.t}</span>}
        {i.caret && <span className="pl-[9px]"><Caret /></span>}
      </button>
    ))}
  </div>
)

const Panel = ({ title, caret = true, className, children }: { title: string; caret?: boolean; className: string; children: ReactNode }) => (
  <section className={`flex shrink-0 flex-col border-r border-[#404040] bg-[#5d5d5d] ${className}`}>
    <div className="flex flex-1 pt-[3px]">{children}</div>
    <h2 className="mx-px mb-px flex h-[22px] items-center justify-center gap-2 bg-linear-to-b from-[#4a4a4a] to-[#525252] whitespace-nowrap">
      {title}
      {caret && <Caret big />}
    </h2>
  </section>
)

const blueBtn = 'border border-[#2a3a60] bg-linear-to-b from-[#86a5d6] to-[#4c648c]'

function Ribbon() {
  return (
    <div className="flex h-[126px] shrink-0 border-b-3 border-[#6a6a6a] bg-linear-to-b from-[#4c4c4c] to-[#373737] text-sm leading-5 text-[#f2f2f2]">
      <Panel title="Palettes" className="w-[142px]">
        <button type="button" className="flex w-[78px] flex-col items-center pt-1.5">
          <svg width="40" height="36" viewBox="0 0 40 36" aria-hidden="true">
            <path d="M3 34L22 12l4 4L7 36z" fill="#b5695a" stroke="#4a211a" />
            <path d="M18 2q10-3 15 4l6 6-4 4-4-4-4 3-6-6q2-4-3-7z" fill="#44484c" stroke="#191a1c" />
            <path d="M2 4l5 4 2-3-3-4q7-1 8 7l14 15q7-1 7 7l-5-4-3 3 3 5q-7 1-8-6L9 12q-7 0-7-8z" fill="#eceef0" stroke="#2b2d30" />
          </svg>
          <span className="pt-1.5">Toolspace</span>
        </button>
        <div className="grid grid-cols-[29px_29px] grid-rows-[27px_27px_27px] gap-x-px gap-y-1 pt-0.5">
          <IconBtn n="panorama" className={blueBtn} />
          <IconBtn n="wrenches" className={blueBtn} />
          <IconBtn n="tripod" className={blueBtn} />
          <IconBtn n="toolbox" className={blueBtn} />
          <IconBtn n="panel" s={18} />
          <IconBtn n="props" s={18} />
        </div>
      </Panel>
      <Panel title="Create Ground Data" className="w-[172px]">
        <Tools
          className="pl-1.5"
          items={[{ n: 'survey', t: 'Import Survey Data' }, { n: 'points', t: 'Points', caret: true }, { n: 'surfaces', t: 'Surfaces', caret: true }]}
        />
      </Panel>
      <Panel title="Create Design" className="w-[401px]">
        <Tools className="w-[139px] pl-1.5" items={[{ n: 'parcel', t: 'Parcel', caret: true }, { n: 'feature', t: 'Feature Line', caret: true }, { n: 'grading', t: 'Grading', caret: true }]} />
        <Tools className="w-[122px]" items={[{ n: 'alignment', t: 'Alignment', caret: true }, { n: 'profile', t: 'Profile', caret: true }, { n: 'corridor', t: 'Corridor' }]} />
        <Tools items={[{ n: 'intersections', t: 'Intersections', caret: true }, { n: 'assembly', t: 'Assembly', caret: true }, { n: 'pipe', t: 'Pipe Network', caret: true }]} />
      </Panel>
      <Panel title="Profile & Section Views" caret={false} className="w-[169px]">
        <Tools className="pl-4" items={[{ n: 'profileview', t: 'Profile View', caret: true }, { n: 'sample', t: 'Sample Lines' }, { n: 'section', t: 'Section Views', caret: true }]} />
      </Panel>
      <Panel title="Draw" className="w-[148px]">
        <Tools className="w-[52px] pl-1.5" items={[{ n: 'line', caret: true }, { n: 'xline', caret: true }, { n: 'curve', caret: true }]} />
        <Tools className="w-[50px]" items={[{ n: 'arc', caret: true }, { n: 'circle', caret: true }, { n: 'ellipse', caret: true }]} />
        <Tools items={[{ n: 'pline' }, { n: 'rect', caret: true }, { n: 'hatch', caret: true }]} />
      </Panel>
      <Panel title="Modify" className="w-[316px]">
        <Tools className="w-[97px] pl-1.5" items={[{ n: 'move', t: 'Move' }, { n: 'copy', t: 'Copy' }, { n: 'stretch', t: 'Stretch' }]} />
        <Tools className="w-[89px]" items={[{ n: 'rotate', t: 'Rotate' }, { n: 'mirror', t: 'Mirror' }, { n: 'scale', t: 'Scale' }]} />
        <Tools className="w-[94px]" items={[{ n: 'trim', t: 'Trim', caret: true }, { n: 'fillet', t: 'Fillet', caret: true }, { n: 'array', t: 'Array', caret: true }]} />
        <Tools items={[{ n: 'erase' }, { n: 'explode' }, { n: 'offset' }]} />
      </Panel>
      <Panel title="Layers" className="w-[341px]">
        <button type="button" className={`mt-px ml-0.5 flex h-[88px] w-[73px] flex-col items-center pt-0.5 ${blueBtn}`}>
          <svg width="40" height="40" viewBox="0 0 40 40" aria-hidden="true">
            <g fill="#f4f4f4" stroke="#33435f" strokeWidth=".8">
              <path d="M10 18h16l-7 8H3z" />
              <path d="M11 10h16l-7 9H4z" />
              <path d="M12 1h17l-7 10H5z" />
            </g>
            <path d="M24 17h15v21H24z" fill="#f2f2f2" stroke="#333" />
            <path d="M27 20h7v7h-7z" fill="#3f79b8" stroke="#222" />
            <path d="M27 31h9M27 35h9M36 20v7" stroke="#444" />
          </svg>
          <span className="pt-1">Layer</span>
          <span>Properties</span>
        </button>
        <div className="flex flex-col pt-0.5 pl-0.5">
          <div className="flex h-[27px] w-[260px] items-center gap-1.5 border border-[#303030] bg-linear-to-b from-[#6c6c6c] to-[#555] px-2">
            <svg width="12" height="20" viewBox="0 0 12 20"><path d="M6 0q6 0 6 6 0 3-3 8H3Q0 9 0 6q0-6 6-6z" fill="#ffeeb0" /><path d="M4 14h4v5H4z" fill="#ddd" /></svg>
            <svg width="22" height="20" viewBox="0 0 22 20"><circle cx="11" cy="10" r="5" fill="#ffe9a0" /><path d="M11 0v3M11 17v3M1 10h3M18 10h3M4 3l2 2M18 3l-2 2M4 17l2-2M18 17l-2-2" stroke="#ddd" strokeWidth="1.5" /></svg>
            <Ico n="layopen" s={18} />
            <span className="h-[19px] w-[18px] border border-black bg-white" />
            <select aria-label="Layer" className="flex-1 appearance-none bg-transparent text-white">
              <option>0</option>
            </select>
            <Caret big />
          </div>
          <div className="grid grid-cols-[30px_30px_30px_30px_28px_auto] grid-rows-[31px_31px] items-center pt-px">
            <IconBtn n="layoff" />
            <IconBtn n="layiso" />
            <IconBtn n="layfrz" />
            <IconBtn n="laylck" />
            <IconBtn n="laycur" />
            <button type="button" className="pl-1 text-left">Make Current</button>
            <IconBtn n="layon" />
            <IconBtn n="layuniso" />
            <IconBtn n="laythw" />
            <IconBtn n="layulk" />
            <IconBtn n="laymch" />
            <button type="button" className="pl-1 text-left">Match Layer</button>
          </div>
        </div>
      </Panel>
      <Panel title="Clipboard" caret={false} className="w-[98px]">
        <button type="button" className="flex w-[68px] flex-col items-center pt-1">
          <svg width="32" height="38" viewBox="0 0 32 38" aria-hidden="true">
            <path d="M1 4h26v32H1z" fill="#b3a394" stroke="#2b2b2b" />
            <path d="M8 6q0-5 6-5t6 5z" fill="#eee" stroke="#2b2b2b" />
            <path d="M10 12h14l7 7v18H10z" fill="#eef1f4" stroke="#2b2b2b" />
            <path d="M24 12v7h7" fill="#bbb" stroke="#2b2b2b" />
          </svg>
          <span className="pt-1.5 pb-1">Paste</span>
          <Caret />
        </button>
        <Tools items={[{ n: 'cut' }, { n: 'clipcopy' }, { n: 'clipprop' }]} />
      </Panel>
    </div>
  )
}

/* ---------- layer manager ---------- */

const Chevrons = () => <span className="text-lg leading-none text-[#c0c0c0]">«</span>

const ScrollBar = ({ thumb, className = '' }: { thumb: string; className?: string }) => (
  <div className={`flex h-[21px] border-y border-white bg-[#f0f0f0] ${className}`}>
    <button type="button" aria-label="Scroll left" className="flex w-[21px] items-center justify-center">
      <svg width="7" height="11" fill="none" stroke="#444" strokeWidth="2"><path d="M6 1L1.5 5.5 6 10" /></svg>
    </button>
    <span className={`bg-[#cdcdcd] ${thumb}`} />
    <button type="button" aria-label="Scroll right" className="ml-auto flex w-[21px] items-center justify-center">
      <svg width="7" height="11" fill="none" stroke="#444" strokeWidth="2"><path d="M1 1l4.5 4.500L1 10" /></svg>
    </button>
  </div>
)

function LayerManager() {
  const th = 'border-r border-[#555] pl-1.5 text-left font-normal whitespace-nowrap'
  return (
    <aside className="flex w-[557px] shrink-0 flex-col bg-[#5d5d5d] text-sm leading-5 text-[#f2f2f2]">
      <h2 className="mt-0.5 mr-0.5 rounded-md bg-[#505050] pl-3.5 text-sm leading-[25px]">LAYER PROPERTIES MANAGER</h2>
      <div className="flex h-[27px] items-start justify-between pt-[7px] pr-0.5 pl-[29px]">
        <span className="pt-[3px]">Current layer: 0 : 0</span>
        <label className="flex h-5 w-[125px] items-center bg-[#696969]">
          <input aria-label="Search for layer" placeholder="Search for layer" className="w-[108px] bg-transparent placeholder:text-[#b4b4b4]" />
          <svg width="12" height="14" viewBox="0 0 12 14"><path d="M6 7l5 6" stroke="#222" strokeWidth="2.5" /><circle cx="5" cy="4.5" r="4" fill="#eef" stroke="#ccc" /></svg>
        </label>
      </div>
      <div className="flex h-[29px] items-center gap-2 pl-0.5">
        {['lf1', 'lf2', 'lf3', 'lf4', 'save'].map((n) => <IconBtn key={n} n={n} s={15} />)}
        <span className="h-[18px] w-px bg-[#2f2f2f]" />
        <span className="h-[18px] w-px bg-[#2f2f2f]" />
        {['folderf', 'folder', 'book'].map((n) => <IconBtn key={n} n={n} s={15} />)}
        <span className="h-[18px] w-px bg-[#2f2f2f]" />
        <IconBtn n="laystate" s={15} />
        <span className="w-3" />
        {['newl', 'newvp', 'frzl', 'dell', 'setl'].map((n) => <IconBtn key={n} n={n} s={15} />)}
        <span className="ml-auto" />
        <IconBtn n="refresh" s={13} />
        <IconBtn n="gear" s={14} className="mr-3 opacity-70" />
      </div>
      <div className="flex flex-1">
        <div className="flex w-[117px] shrink-0 flex-col border-r border-[#4a4a4a]">
          <div className="flex h-[22px] items-center justify-between border-b border-[#4a4a4a] px-1.5">
            Filters
            <Chevrons />
          </div>
          <ul className="flex-1 leading-4">
            <li className="flex items-center gap-2 pt-1 pl-1.5">
              <span className="flex h-[11px] w-[11px] items-center bg-[#eee] px-0.5"><span className="h-px w-full bg-[#224]" /></span>
              <span className="flex items-center">
                <Ico n="laychk" s={14} />
                <span className="ml-1 bg-white px-0.5 text-black">All</span>
              </span>
            </li>
            <li className="flex items-center gap-[5px] pl-[41px] whitespace-nowrap">
              <Ico n="folderf" s={14} />
              <span>All Used</span>
            </li>
          </ul>
          <ScrollBar thumb="w-[52px]" />
          <label className="flex h-6 items-center pl-1 whitespace-nowrap">
            <input type="checkbox" className="h-4 w-4 appearance-none border border-[#333] bg-white" />
            <span className="w-[83px] pl-1">Invert filte</span>
            <Chevrons />
          </label>
        </div>
        <div className="flex flex-1 flex-col pr-[3px] pl-[3px]">
          <div className="flex flex-1 flex-col">
            <table className="w-full table-fixed border-collapse">
              <colgroup>
                <col className="w-6" />
                <col className="w-[91px]" />
                <col className="w-6" />
                <col className="w-[41px]" />
                <col className="w-[31px]" />
                <col className="w-[43px]" />
                <col className="w-[42px]" />
                <col className="w-[105px]" />
                <col />
              </colgroup>
              <thead>
                <tr className="h-[23px] bg-[#666]">
                  <th className={th}>S...</th>
                  <th className={th}>
                    <span className="flex items-center justify-between pr-1">
                      Name
                      <svg width="9" height="6"><path d="M0 6h9L4.5 0z" fill="#999" /></svg>
                    </span>
                  </th>
                  <th className={th}>O.</th>
                  <th className={th}>Fr...</th>
                  <th className={th}>L...</th>
                  <th className={th}>Co...</th>
                  <th className={th}>Lin...</th>
                  <th className={th}>Lineweight</th>
                  <th className="pl-1 text-left font-normal">Tran</th>
                </tr>
              </thead>
              <tbody>
                <tr className="h-[22px] bg-[#969696] whitespace-nowrap text-[#111]">
                  <td><svg width="16" height="16" viewBox="0 0 16 16"><path d="M1 8l5 6L15 3" fill="none" stroke="#2f8a0a" strokeWidth="3" /></svg></td>
                  <td className="border-r-2 border-[#5d5d5d] pl-1">0</td>
                  <td className="pl-2"><svg width="8" height="14" viewBox="0 0 8 14"><path d="M4 0q4 0 4 4 0 3-2 5H2Q0 7 0 4q0-4 4-4z" fill="#ffffe0" /><path d="M2 9h4v4H2z" fill="#ddd" /></svg></td>
                  <td className="pl-3"><svg width="16" height="16" viewBox="0 0 16 16"><circle cx="8" cy="8" r="4" fill="#fff0a8" /><path d="M8 0v2M8 14v2M0 8h2M14 8h2M2 2l2 2M14 2l-2 2M2 14l2-2M14 14l-2-2" stroke="#eee" /></svg></td>
                  <td className="pl-1.5"><svg width="17" height="16" viewBox="0 0 17 16"><path d="M9 8V4a3 3 0 0 1 6 0v2" fill="none" stroke="#222" strokeWidth="1.5" /><path d="M1 7h11v8H1z" fill="#f0d8a8" stroke="#222" /><path d="M6.5 9v4" stroke="#222" /></svg></td>
                  <td className="pl-1"><span className="flex items-center gap-1"><span className="h-[13px] w-3 border border-black bg-white" />wh</span></td>
                  <td className="pl-1">Co...</td>
                  <td className="pl-0.5"><span className="flex items-center gap-2"><span className="h-px w-[34px] bg-black" />Default</span></td>
                  <td className="pl-1">0</td>
                </tr>
              </tbody>
            </table>
            <div className="w-[116px] flex-1 border-r-2 border-[#515151]" />
          </div>
          <ScrollBar thumb="w-[184px]" />
        </div>
      </div>
      <p className="mr-1 h-[35px] border-b border-[#484848] pt-[11px] pl-1">All: 1 layers displayed of 1 total layers</p>
      <div className="h-0.5" />
    </aside>
  )
}

/* ---------- drawing area ---------- */

const NavBar = () => (
  <svg width="32" height="213" viewBox="0 0 32 213" fill="none" stroke="#3a3f46" strokeWidth="1.3" className="absolute top-[236px] right-1" aria-hidden="true">
    <rect x=".5" y=".5" width="31" height="212" rx="4" fill="#5b6168" stroke="#72777d" strokeWidth="1" />
    <circle cx="26" cy="5" r="3.5" />
    <path d="M6 31q0-11 10-11h10v10q0 11-10 11T6 31z" />
    <circle cx="16" cy="31" r="8" />
    <circle cx="16" cy="31" r="4.5" />
    <path d="M13 50h6l-3 3zM13 120h6l-3 3zM13 158h6l-3 3z" fill="#3a3f46" stroke="none" />
    <path d="M10 83l-5-8q-1-3 2-2l4 4-2-11q1-3 3 0l2 7V64q2-3 3 0v9l3-8q3-1 2 2l-2 9 4-5q3 0 2 3l-5 9q-2 2-2 2h-8z" />
    <path d="M5 91l14 14M20 91L5 105M5 95v-4h4M16 91h4v4M5 101v4h4" />
    <circle cx="20" cy="104" r="5" />
    <path d="M24 108l4 5" strokeWidth="2.5" />
    <path d="M16 129v22M13 133l3-5 3 5M6 140q-2 5 10 6 12-1 10-6t-14-3M20 142l-5 4 5 4" />
    <path d="M5 170h6v6H5zM13 170h6v6h-6zM21 170h6v6h-6zM5 180h16v12H5zM10 183v6l6-3z" />
    <circle cx="26" cy="206" r="3.5" />
    <path d="M24 205h4M24 207h4" strokeWidth=".8" />
  </svg>
)

const ViewCube = () => (
  <svg width="134" height="134" viewBox="-67 -67 134 134" className="absolute top-[39px] right-4" aria-hidden="true">
    <circle r="53" fill="none" stroke="#454b53" strokeWidth="13" />
    <rect x="-26" y="-26" width="52" height="52" fill="#a9aaac" />
    <rect x="-16" y="-16" width="32" height="32" fill="#9a9ea3" />
    <g fontFamily="Liberation Sans, sans-serif" fontWeight="700" textAnchor="middle" fill="#a7a9ac">
      <text y="4" fontSize="12" fill="#42484f">TOP</text>
      <text y="-49" fontSize="20">N</text>
      <text y="64" fontSize="20">S</text>
      <text x="-56" y="7" fontSize="20">W</text>
      <text x="56" y="7" fontSize="20">E</text>
    </g>
  </svg>
)

function CommandLine() {
  return (
    <div className="absolute right-[190px] bottom-0 left-[189px] flex flex-col items-start">
      <div className="flex flex-col items-start gap-1.5 pb-[3px] pl-[75px] font-['Liberation_Mono',monospace] text-lg leading-[23px] text-[#cfcfcf]">
        <p className="rounded-sm bg-[#5a5d60] px-0.5">2 found</p>
        <p className="rounded-sm bg-[#5a5d60] px-0.5 pr-2 whitespace-pre">
          {'A group with same objects already exists.  Create a new group anyway?\n[Yes/No]: <N>: y'}
        </p>
        <p className="rounded-sm bg-[#5a5d60] px-0.5 pr-1 text-white">Unnamed group has been created.</p>
      </div>
      <div className="flex h-[34px] w-full overflow-hidden rounded-md border border-[#777] bg-white">
        <div className="flex w-[67px] items-center gap-2 bg-linear-to-b from-[#8a8a8a] to-[#3f3f3f] pl-1">
          <svg width="8" height="22"><path d="M1.5 0v22M5.5 0v22" stroke="#ccc" strokeWidth="2" strokeDasharray="2 2" /></svg>
          <button type="button" aria-label="Close command line">
            <svg width="10" height="10" stroke="#fff" strokeWidth="2.5"><path d="M1 0l8 10M9 0L1 10" /></svg>
          </button>
          <button type="button" aria-label="Customize command line">
            <svg width="19" height="20" viewBox="0 0 19 20"><path d="M1 5l4 3 3-2-1-5q6 0 6 7l6 8-4 4-6-8q-7 1-8-7z" fill="#e2e5e8" stroke="#333" strokeWidth=".8" /></svg>
          </button>
        </div>
        <div className="flex flex-1 items-center gap-1 px-1.5">
          <svg width="19" height="18" viewBox="0 0 19 18"><rect x=".5" y=".5" width="18" height="17" rx="2" fill="#dde0e6" stroke="#a3a8b2" /><path d="M4 5l4 4-4 4M10 13h5" fill="none" stroke="#667" strokeWidth="1.5" /></svg>
          <svg width="7" height="4"><path d="M0 0h7L3.5 4z" fill="#777" /></svg>
          <span className="h-6 w-px bg-black" />
          <input aria-label="Command" className="flex-1 font-['Liberation_Mono',monospace] text-lg text-black outline-none" />
          <svg width="10" height="6"><path d="M0 6h10L5 0z" fill="#222" /></svg>
        </div>
      </div>
    </div>
  )
}

function Canvas() {
  return (
    <main className="relative flex-1 overflow-hidden bg-[#212830]">
      <svg width="100%" height="100%" className="block" aria-hidden="true">
        <defs>
          <pattern id="minor" x="9" y="29.6" width="16.72" height="16.72" patternUnits="userSpaceOnUse">
            <path d="M0 .5h17M.5 0v17" stroke="#272c37" />
          </pattern>
          <pattern id="major" x="9" y="29.6" width="83.6" height="83.6" patternUnits="userSpaceOnUse">
            <path d="M0 .5h84M.5 0v84" stroke="#32364a" />
          </pattern>
        </defs>
        <rect width="100%" height="100%" fill="url(#minor)" />
        <rect width="100%" height="100%" fill="url(#major)" />
        <path d="M0 782.5h1600" stroke="#7a2226" />
        <g transform="translate(-557 -180)" fill="none" stroke="#e3e3e3" strokeWidth="1.1">
          <path d="M924.5 667.500l-36-112 235-30-51 134.500M1143.500 716.500l-77-27 100-67v94l132-53" />
          <g stroke="#fff" strokeWidth="1">
            <path d="M1074 669.500h45M1126 669.500h45M1122.500 621v45M1122.500 673v45M1119.500 666.500h6v6h-6z" />
            <path d="M577.500 924v46M581 974.500h47M573.500 970.500h8v8h-8z" />
            <path d="M577.500 974.500h5M577.500 970v5" />
          </g>
          <path d="M580 907l5 6 5-6M585 913v6M633 961l11 12M644 961l-11 12" strokeWidth="1.3" />
        </g>
      </svg>
      <div className="absolute top-1 left-[3px] text-xs leading-5 text-[#f0f0f0]">[−][Top][2D Wireframe]</div>
      <div className="absolute top-[9px] right-3 flex items-center gap-2.5">
        <button type="button" aria-label="Minimize drawing"><svg width="10" height="12"><path d="M0 9h10" stroke="#fff" strokeWidth="3" /></svg></button>
        <button type="button" aria-label="Restore drawing"><svg width="10" height="12" fill="none" stroke="#fff" strokeWidth="1.6"><path d="M1 4h6v6H1zM3 3V1h6v7H8" /></svg></button>
        <button type="button" aria-label="Close drawing"><svg width="9" height="12" stroke="#fff" strokeWidth="2.2"><path d="M1 2l7 8M8 2l-7 8" /></svg></button>
      </div>
      <ViewCube />
      <button type="button" className="absolute top-[193px] right-[59px] flex h-[18px] w-12 items-center justify-around rounded-sm border border-[#a5a6b0] bg-[#85878f] text-[11px] text-[#dcdce2]">
        WCS
        <svg width="9" height="6" fill="none" stroke="#b5b6be"><path d="M.5 .5h8l-4 5z" /></svg>
      </button>
      <NavBar />
      <CommandLine />
    </main>
  )
}

/* ---------- right toolbars ---------- */

const bars: string[][][] = [
  [
    ['dimlin', 'dimali', 'dimarc', 'dimord', '-', 'dimrad', 'dimjog', 'dimdia', 'dimang', '-', 'dimquick', 'dimbase', 'dimcont', 'dimspace', 'dimbreak', '-', 'tol', 'center', 'inspect', 'jogline', '-', 'dimedit', 'dimtext', 'dimupd', '-', 'dimstyle'],
    ['laymch', 'laychk', 'layiso', 'layuniso', 'layppl', 'laywalk', '-', 'layfrz', 'layoff', 'laylck', 'layulk'],
  ],
  [
    ['brgdist', 'azdist', 'defl', 'ang', 'sheetgrid', 'globegrid', 'globe', 'ptnum', 'ptname', 'ptpick', 'ptzoom', 'sideshot', 'stnoff', '-', 'ptfilt', '-', 'profsta', 'profbld', 'profpt', '-', 'tr1', 'tr2', 'tr3', 'tr4', 'radmch', 'lenmch', 'curvecalc'],
    ['filtpick', 'filtgrid', 'filtnum'],
    ['laystate', 'laycur', 'layprev', 'laywin'],
  ],
  [['front', 'back', 'above', 'under', '-', 'textfront', 'hatchback']],
]

function SideBars() {
  return (
    <div className="flex w-[87px] shrink-0 items-start gap-1 bg-[#5d5d5d] pl-1">
      {bars.map((col, c) => (
        <div key={c} className="flex flex-col gap-px">
          {col.map((bar, b) => (
            <div key={b} className="flex w-6 flex-col items-center border border-[#333] bg-[#5d5d5d]">
              <svg width="22" height="8" className="bg-[#4c4c4c]" aria-hidden="true">
                <path d="M4 3h14M4 5.5h14" stroke="#1d1d1d" strokeWidth="1.4" strokeDasharray="1.4 1" />
              </svg>
              {bar.map((n, i) =>
                n === '-' ? (
                  <span key={i} className="mt-[3px] mb-0.5 h-px w-[19px] bg-white" />
                ) : (
                  <IconBtn key={i} n={n} s={17} className="h-[22px] w-full" />
                )
              )}
            </div>
          ))}
        </div>
      ))}
    </div>
  )
}

/* ---------- status bar ---------- */

const g = '#c4c4c4'
const on = '#2f9bff'

const St = ({ children, label }: { children: ReactNode; label: string }) => (
  <button type="button" aria-label={label} className="flex shrink-0 items-center">
    <svg width="20" height="22" viewBox="0 0 20 22" fill="none" strokeWidth="1.6">{children}</svg>
  </button>
)

const Cell = ({ className = '', children }: { className?: string; children: ReactNode }) => (
  <div className={`flex items-center justify-around border border-[#8a8a8a] bg-[#575757] ${className}`}>{children}</div>
)

const Down = () => (
  <svg width="9" height="7" className="shrink-0" aria-hidden="true"><path d="M0 0h9L4.5 7z" fill="#fff" /></svg>
)

const AnnoShape = ({ c, extra }: { c: string; extra?: ReactNode }) => (
  <>
    <path d="M10 1L7.500 12 1 20l9-4 9 4-6.500-8z" fill={c} />
    {extra}
  </>
)

const sheetTab = 'h-[22px] rounded-b-xl bg-[#626262] text-center text-sm leading-5 text-[#b5b5b5]'

function StatusBar() {
  return (
    <footer className="flex h-[35px] shrink-0 justify-between border-t border-[#777] bg-[#373737]">
      <div className="flex items-start gap-[3px] pl-2.5">
        <button type="button" className="h-[22px] w-[78px] rounded-b-xl bg-linear-to-b from-[#5d5d5d] to-[#8f8f8f] text-center text-sm leading-5 font-bold text-white">Model</button>
        <button type="button" className={`${sheetTab} w-[76px]`}>Layout1</button>
        <button type="button" className={`${sheetTab} w-[78px]`}>Layout2</button>
        <button type="button" aria-label="New layout" className="ml-1 h-5 w-7 rounded-tl-xl rounded-br-xl border border-[#666] bg-[#444] text-center text-base leading-4 font-bold text-[#ddd]">+</button>
      </div>
      <div className="flex h-[33px] gap-px">
        <Cell className="w-[62px] text-sm text-white"><button type="button">MODEL</button></Cell>
        <Cell className="w-20">
          <St label="Grid"><path d="M4 1v20M8 1v20M12 1v20M16 1v20M1 4h18M1 8h18M1 12h18M1 16h18" stroke={on} strokeWidth="1.3" /></St>
          <St label="Snap"><path d="M1 3h18M1 7h18M1 11h18M1 15h18M1 19h18" stroke={g} strokeDasharray="1.5 2" strokeWidth="1.4" /></St>
          <Down />
        </Cell>
        <Cell className="w-[129px]">
          <St label="Ortho"><path d="M3 2v17h16M3 13h5v6" stroke={g} /></St>
          <St label="Polar"><path d="M9 12h10M9 12l6-10M14 6a7.500 7.500 0 1 0 2 7M15 2v7" stroke={g} /></St>
          <Down />
          <St label="Isodraft"><path d="M4 1l12 20M14 1l-8 20" stroke="#9a9a9a" strokeWidth="1.2" /><path d="M14 1L10 11M2 3l6 7" stroke={g} strokeWidth="1.6" /></St>
          <Down />
        </Cell>
        <Cell className="w-20">
          <St label="Object snap tracking"><path d="M1 19h18M2 18L17 3" stroke={on} strokeWidth="2" /><circle cx="8" cy="12" r="2" fill={on} /></St>
          <St label="Object snap"><path d="M3 4h15v15H3z" stroke={on} strokeWidth="2" /><path d="M0 1h7v7H0z" fill="#19d21f" stroke="#0a4f0c" /></St>
          <Down />
        </Cell>
        <Cell className="w-[132px]">
          <St label="Annotation visibility"><AnnoShape c={on} extra={<circle cx="15" cy="5" r="3" stroke={on} />} /></St>
          <St label="Auto scale"><AnnoShape c={g} extra={<path d="M17 1l-3 5h4l-4 6" stroke={g} />} /></St>
          <St label="Annotation scale"><AnnoShape c={g} /></St>
          <span className="flex items-center gap-1.5 text-sm text-white">1:1<Down /></span>
        </Cell>
        <Cell className="w-[50px]">
          <Ico n="gear" s={16} />
          <Down />
        </Cell>
        <Cell className="w-8"><St label="Crosshair"><path d="M10 2v18M1 11h18" stroke={g} strokeWidth="2" /></St></Cell>
        <Cell className="w-8"><St label="Hardware acceleration"><circle cx="10" cy="11" r="9" fill="#0b4f96" stroke={on} /><path d="M9 13l5-5" stroke="#9fd0ff" /></St></Cell>
        <Cell className="w-10"><St label="Isolate objects"><path d="M2 2h8v8H2zM6 20l4-8 4 8z" stroke={g} /><circle cx="15" cy="9" r="3.5" stroke={g} /></St></Cell>
        <Cell className="w-[62px]">
          <St label="Clean screen"><path d="M1 4h18v14H1z" stroke={g} /><path d="M10 6h6v6zM4 10v6h6z" fill={g} /></St>
          <St label="Customization"><path d="M1 4h18M1 11h18M1 18h18" stroke={g} strokeWidth="2" /></St>
        </Cell>
      </div>
    </footer>
  )
}

/* ---------- taskbar ---------- */

const taskApps: { label: string; icon: ReactNode; state?: 'open' | 'active' | 'shell' }[] = [
  { label: 'Start', state: 'shell', icon: <svg width="20" height="20" viewBox="0 0 20 20" fill="#fff"><path d="M0 3l8-1v8H0zM9 2l11-2v10H9zM0 11h8v7l-8-1zM9 11h11v9L9 18z" /></svg> },
  { label: 'Search', state: 'shell', icon: <svg width="22" height="22" viewBox="0 0 22 22" fill="none" stroke="#fff" strokeWidth="1.5"><circle cx="14" cy="8" r="6.5" /><path d="M9.5 13L2 21" /></svg> },
  { label: 'Task view', state: 'shell', icon: <svg width="24" height="20" viewBox="0 0 24 20" fill="none" stroke="#fff" strokeWidth="1.5"><path d="M5 1h14v17H5zM3 4H1v12h2M21 4h2v12h-2" /></svg> },
  {
    label: 'Chrome',
    state: 'open',
    icon: (
      <svg width="28" height="28" viewBox="0 0 28 28">
        <circle cx="14" cy="14" r="14" fill="#ffcd41" />
        <path d="M14 14L1.9 7A14 14 0 0 1 26.100 7z" fill="#de5145" />
        <path d="M1.9 7A14 14 0 0 0 13 28l6-11-5-3z" fill="#1aa260" />
        <circle cx="14" cy="14" r="6.5" fill="#fff" />
        <circle cx="14" cy="14" r="5" fill="#4a8af4" />
      </svg>
    ),
  },
  { label: 'Edge', icon: <FaEdgeLegacy size={26} color="#0b7ad9" /> },
  {
    label: 'Firefox',
    icon: (
      <svg width="28" height="28" viewBox="0 0 28 28">
        <circle cx="14" cy="14" r="13" fill="#e2621b" />
        <circle cx="15" cy="11" r="10" fill="#2c63a8" />
        <path d="M13 2q6-1 9 3-3 0-5 3l2 4q-3 2-5-1z" fill="#5fa9dd" />
        <path d="M1 13Q1 6 5 3l2 3q4-1 6 1l-3 3 1 3q3 2 7 0-2 5-7 5 8 4 12-4 2-7-2-10 6 4 6 11-2 12-14 12T1 13z" fill="#f0861d" />
        <path d="M3 18q4 8 14 7 7-2 9-10 1 12-12 12-8 0-11-9z" fill="#d8401a" />
      </svg>
    ),
  },
  {
    label: 'File Explorer',
    icon: (
      <svg width="28" height="24" viewBox="0 0 28 24">
        <path d="M0 0h12l2 3h14v19H0z" fill="#f3c64c" />
        <path d="M0 5h28v17H0z" fill="#fbe08c" />
        <path d="M5 23V13h18v10h-5v-6h-8v6z" fill="#3fb1e5" />
      </svg>
    ),
  },
  {
    label: 'Store',
    icon: (
      <svg width="28" height="30" viewBox="0 0 28 30">
        <path d="M8 9V5q0-4 4-4t4 4v4M11 5q1-3 4-2t3 6" fill="none" stroke="#fff" strokeWidth="1.4" />
        <path d="M1 10l26-2v21l-26-3z" fill="#fff" />
        <path d="M6 14l5-1v4H6zM12 13l7-1v5h-7zM6 18h5v5l-5-1zM12 18h7v6l-7-1z" fill="#020b0f" />
      </svg>
    ),
  },
  {
    label: 'LINE',
    icon: (
      <svg width="30" height="30" viewBox="0 0 30 30">
        <rect width="30" height="30" rx="4" fill="#00b900" />
        <path d="M15 4q11 1 11 10 0 6-10 13 0-4-1-4Q4 22 4 13 4 5 15 4z" fill="#fff" />
        <text x="15" y="16" fontSize="7" fontWeight="700" textAnchor="middle" fill="#00b900" fontFamily="Liberation Sans, sans-serif">LINE</text>
      </svg>
    ),
  },
  {
    label: 'Civil 3D',
    state: 'active',
    icon: (
      <span className="flex h-[30px] w-[30px] flex-col items-center bg-linear-to-b from-[#e8eef3] to-[#b9cad8]">
        <AppLogo s={22} />
        <span className="self-end pr-px text-[7px] leading-[7px] text-black">C3D</span>
      </span>
    ),
  },
]

function TaskBar() {
  return (
    <div className="flex h-[50px] shrink-0 justify-between bg-[#010b0f] text-white">
      <div className="flex">
        {taskApps.map((a) => (
          <button
            key={a.label}
            type="button"
            aria-label={a.label}
            className={`relative flex items-center justify-center ${a.state === 'shell' ? 'w-[61px]' : 'w-[62px]'} ${a.state === 'active' ? 'bg-[#323d42]' : ''}`}
          >
            {a.icon}
            {a.state === 'open' && <span className="absolute bottom-0 h-[3px] w-[51px] bg-[#76b9ed]" />}
            {a.state === 'active' && <span className="absolute bottom-0 h-[3px] w-full bg-[#76b9ed]" />}
          </button>
        ))}
      </div>
      <div className="flex items-center">
        <div className="flex items-center gap-2.5 pr-3.5">
          <svg width="16" height="9" fill="none" stroke="#fff" strokeWidth="1.5"><path d="M1 8l7-7 7 7" /></svg>
          <svg width="20" height="22" viewBox="0 0 20 22"><path d="M5 1l5 3-5 3-5-3zM15 1l5 3-5 3-5-3zM5 8l5 3-5 3-5-3zM15 8l5 3-5 3-5-3zM5 16l5-3 5 3-5 3z" fill="#fff" /><circle cx="14" cy="15" r="6" fill="#2fae3f" /><path d="M11 15l2 2 4-4" stroke="#fff" strokeWidth="1.5" fill="none" /></svg>
          <span className="flex h-5 w-5 items-center justify-center rounded-md border-2 border-[#a6e3e6] bg-[#1c8288] text-base leading-3 font-bold">e</span>
          <svg width="20" height="14" viewBox="0 0 20 14" fill="none" stroke="#fff"><path d="M5 3.5h13v9H4V9M18 6h1.500v4H18M1 1v3h4V1M3 4v4" /><path d="M8 6h8v5H8z" fill="#fff" /></svg>
          <svg width="19" height="17" viewBox="0 0 19 17" fill="none" stroke="#ccc" strokeWidth="1.5"><path d="M2 16Q3 4 17 2M6 16q1-8 11-10M10 16q0-4 7-6" /><circle cx="15" cy="14" r="1.5" fill="#fff" stroke="none" /></svg>
          <svg width="20" height="16" viewBox="0 0 20 16" fill="none" stroke="#fff" strokeWidth="1.3"><path d="M1 5h3l4-4v14l-4-4H1zM11 5q2 3 0 6" /><path d="M14 3q3 5 0 10M17 1q4 7 0 14" stroke="#777" /></svg>
        </div>
        <span className="text-sm">ENG</span>
        <div className="flex w-[96px] flex-col items-center text-sm leading-[23px]">
          <span>11:26 AM</span>
          <span>4/19/2017</span>
        </div>
        <svg width="20" height="20" viewBox="0 0 20 20" fill="none" stroke="#fff" strokeWidth="1.4" className="ml-2.5"><path d="M1 1h18v14h-6l-3 3-3-3H1z" /></svg>
        <span className="ml-6 h-full w-[7px] border-l border-[#555]" />
      </div>
    </div>
  )
}

export default function App() {
  return (
    <div className="flex h-screen flex-col overflow-hidden bg-[#5d5d5d] font-['Open_Sans','Noto_Sans',sans-serif]">
      <TitleBar />
      <RibbonTabs />
      <Ribbon />
      <div className="flex min-h-0 flex-1">
        <LayerManager />
        <Canvas />
        <SideBars />
      </div>
      <StatusBar />
      <TaskBar />
    </div>
  )
}
